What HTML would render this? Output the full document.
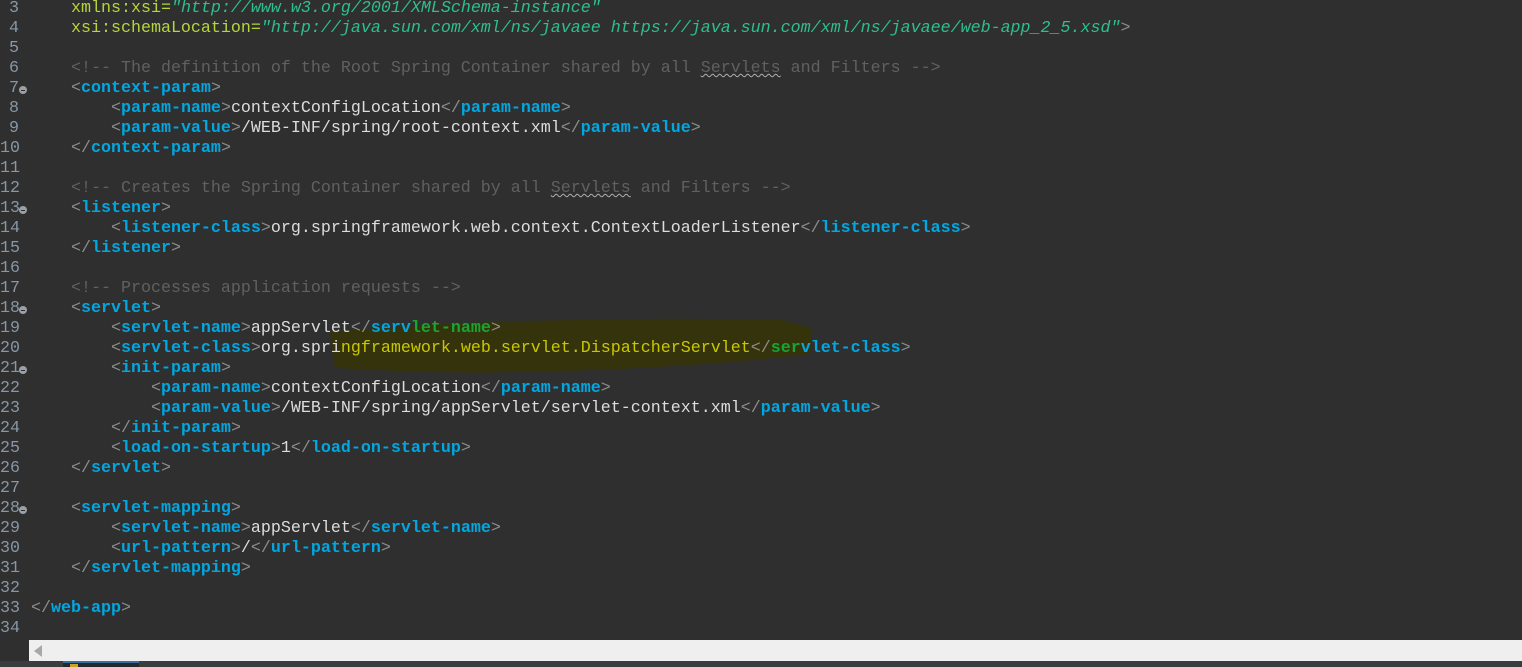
<!DOCTYPE html>
<html><head><meta charset="utf-8"><style>
html,body{margin:0;padding:0;width:1522px;height:667px;overflow:hidden;background:#2f2f2f;}
.code{position:absolute;left:0;top:-1px;font-family:"Liberation Mono",monospace;font-size:16.67px;line-height:20px;white-space:pre;color:#dcdcdc;}
.ln{display:inline-block;width:31px;color:#8797a5;position:relative;}
.ln b{display:inline-block;width:19px;text-align:right;font-weight:normal;}
.ln i{position:absolute;left:19px;top:7px;width:8px;height:8px;border-radius:50%;background:#9aa0a6;}
.ln i:after{content:"";position:absolute;left:2px;top:3.5px;width:4px;height:1px;background:#2f2f2f;}
.b{color:#8c8c8c}
.t{color:#00a7e1;font-weight:bold}
.a{color:#b6d43c}
.s{color:#2dbf8c;font-style:italic}
.c{color:#606060}
.u{text-decoration:underline wavy #b0b0b0;text-decoration-thickness:1px;}
.y{color:#c9c800}
.g{color:#17a534;font-weight:bold}
</style></head><body>
<svg style="position:absolute;left:0;top:0" width="1522" height="667"><path d="M330 332 C450 320 650 317 782 320 L812 328 L810 354 C700 367 560 374 420 372 L335 368 Z" fill="#35330b"/></svg>
<div class="code"><span class="ln"><b>3</b></span>    <span class="a">xmlns:xsi=</span><span class="s">"http://www.w3.org/2001/XMLSchema-instance"</span>
<span class="ln"><b>4</b></span>    <span class="a">xsi:schemaLocation=</span><span class="s">"http://java.sun.com/xml/ns/javaee https://java.sun.com/xml/ns/javaee/web-app_2_5.xsd"</span><span class="b">&gt;</span>
<span class="ln"><b>5</b></span>
<span class="ln"><b>6</b></span>    <span class="c">&lt;!-- The definition of the Root Spring Container shared by all <span class="u">Servlets</span> and Filters --&gt;</span>
<span class="ln"><b>7</b><i></i></span>    <span class="b">&lt;</span><span class="t">context-param</span><span class="b">&gt;</span>
<span class="ln"><b>8</b></span>        <span class="b">&lt;</span><span class="t">param-name</span><span class="b">&gt;</span>contextConfigLocation<span class="b">&lt;/</span><span class="t">param-name</span><span class="b">&gt;</span>
<span class="ln"><b>9</b></span>        <span class="b">&lt;</span><span class="t">param-value</span><span class="b">&gt;</span>/WEB-INF/spring/root-context.xml<span class="b">&lt;/</span><span class="t">param-value</span><span class="b">&gt;</span>
<span class="ln"><b>10</b></span>    <span class="b">&lt;/</span><span class="t">context-param</span><span class="b">&gt;</span>
<span class="ln"><b>11</b></span>
<span class="ln"><b>12</b></span>    <span class="c">&lt;!-- Creates the Spring Container shared by all <span class="u">Servlets</span> and Filters --&gt;</span>
<span class="ln"><b>13</b><i></i></span>    <span class="b">&lt;</span><span class="t">listener</span><span class="b">&gt;</span>
<span class="ln"><b>14</b></span>        <span class="b">&lt;</span><span class="t">listener-class</span><span class="b">&gt;</span>org.springframework.web.context.ContextLoaderListener<span class="b">&lt;/</span><span class="t">listener-class</span><span class="b">&gt;</span>
<span class="ln"><b>15</b></span>    <span class="b">&lt;/</span><span class="t">listener</span><span class="b">&gt;</span>
<span class="ln"><b>16</b></span>
<span class="ln"><b>17</b></span>    <span class="c">&lt;!-- Processes application requests --&gt;</span>
<span class="ln"><b>18</b><i></i></span>    <span class="b">&lt;</span><span class="t">servlet</span><span class="b">&gt;</span>
<span class="ln"><b>19</b></span>        <span class="b">&lt;</span><span class="t">servlet-name</span><span class="b">&gt;</span>appServlet<span class="b">&lt;/</span><span class="t">serv</span><span class="g">let-name</span><span class="b">&gt;</span>
<span class="ln"><b>20</b></span>        <span class="b">&lt;</span><span class="t">servlet-class</span><span class="b">&gt;</span>org.spri<span class="y">ngframework.web.servlet.DispatcherServlet</span><span class="b">&lt;/</span><span class="g">ser</span><span class="t">vlet-class</span><span class="b">&gt;</span>
<span class="ln"><b>21</b><i></i></span>        <span class="b">&lt;</span><span class="t">init-param</span><span class="b">&gt;</span>
<span class="ln"><b>22</b></span>            <span class="b">&lt;</span><span class="t">param-name</span><span class="b">&gt;</span>contextConfigLocation<span class="b">&lt;/</span><span class="t">param-name</span><span class="b">&gt;</span>
<span class="ln"><b>23</b></span>            <span class="b">&lt;</span><span class="t">param-value</span><span class="b">&gt;</span>/WEB-INF/spring/appServlet/servlet-context.xml<span class="b">&lt;/</span><span class="t">param-value</span><span class="b">&gt;</span>
<span class="ln"><b>24</b></span>        <span class="b">&lt;/</span><span class="t">init-param</span><span class="b">&gt;</span>
<span class="ln"><b>25</b></span>        <span class="b">&lt;</span><span class="t">load-on-startup</span><span class="b">&gt;</span>1<span class="b">&lt;/</span><span class="t">load-on-startup</span><span class="b">&gt;</span>
<span class="ln"><b>26</b></span>    <span class="b">&lt;/</span><span class="t">servlet</span><span class="b">&gt;</span>
<span class="ln"><b>27</b></span>
<span class="ln"><b>28</b><i></i></span>    <span class="b">&lt;</span><span class="t">servlet-mapping</span><span class="b">&gt;</span>
<span class="ln"><b>29</b></span>        <span class="b">&lt;</span><span class="t">servlet-name</span><span class="b">&gt;</span>appServlet<span class="b">&lt;/</span><span class="t">servlet-name</span><span class="b">&gt;</span>
<span class="ln"><b>30</b></span>        <span class="b">&lt;</span><span class="t">url-pattern</span><span class="b">&gt;</span>/<span class="b">&lt;/</span><span class="t">url-pattern</span><span class="b">&gt;</span>
<span class="ln"><b>31</b></span>    <span class="b">&lt;/</span><span class="t">servlet-mapping</span><span class="b">&gt;</span>
<span class="ln"><b>32</b></span>
<span class="ln"><b>33</b></span><span class="b">&lt;/</span><span class="t">web-app</span><span class="b">&gt;</span>
<span class="ln"><b>34</b></span></div>
<div style="position:absolute;left:29px;top:640px;width:1493px;height:21px;background:#efefef;"></div>
<div style="position:absolute;left:34px;top:645px;width:0;height:0;border-top:6px solid transparent;border-bottom:6px solid transparent;border-right:8px solid #a8a8a8;"></div>
<div style="position:absolute;left:0;top:661px;width:1522px;height:6px;background:#3a3c3e;"></div>
<div style="position:absolute;left:63px;top:661px;width:76px;height:6px;background:#24282b;border-top:2px solid #3b6fa0;box-sizing:border-box;"></div>
<div style="position:absolute;left:70px;top:664px;width:8px;height:3px;background:#c9a227;"></div>
</body></html>
